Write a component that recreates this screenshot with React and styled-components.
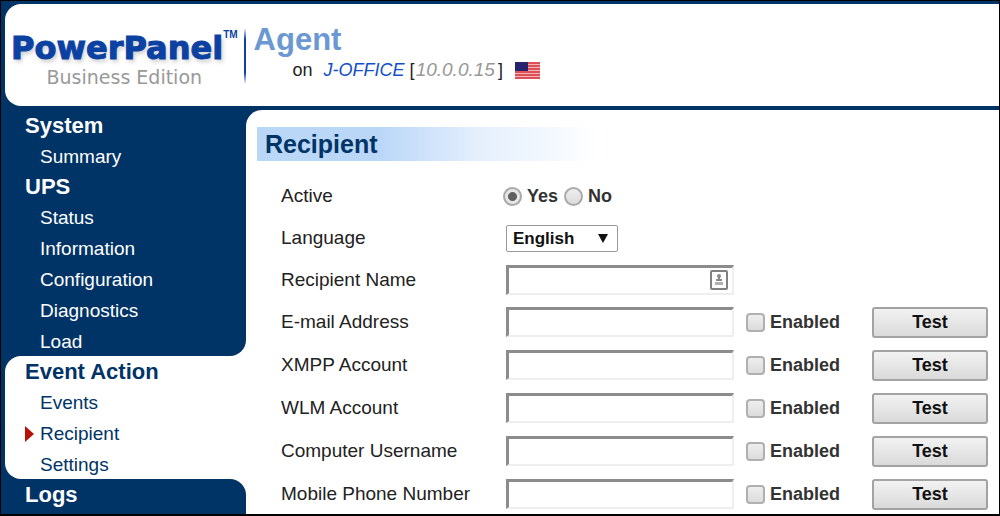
import React, { useState } from "react";
import styled, { createGlobalStyle, css } from "styled-components";

const navy = "#003366";
const sans = '"Liberation Sans", Arial, sans-serif';

const GlobalStyle = createGlobalStyle`
  *, *::before, *::after { box-sizing: border-box; }
  body { margin: 0; background: ${navy}; font-family: ${sans}; }
  button, input, select { font-family: inherit; }
`;

const Page = styled.div`
  min-height: 100vh;
  display: flex;
  flex-direction: column;
  border: 1px solid #000;
  border-bottom-width: 2px;
  background: ${navy};
`;

const Header = styled.header`
  display: flex;
  align-items: flex-start;
  min-height: 102px;
  margin: 3px 0 4px 4px;
  padding: 20px 16px 0 6px;
  background: #fff;
  border-radius: 16px 0 0 16px;
`;

const Logo = styled.div`
  display: grid;
  grid-template-columns: auto auto;
  justify-items: center;
  padding-top: 5px;
  color: #0a41a3;
`;

const LogoName = styled.span`
  font: 700 32px/38px "DejaVu Sans", ${sans};
  -webkit-text-stroke: 1px #0a41a3;
  text-shadow: 2px 3px 4px rgba(0, 0, 0, 0.2);
`;

const LogoMark = styled.span`
  font-size: 10px;
  font-weight: 700;
  line-height: 12px;
`;

const LogoEdition = styled.span`
  grid-column: 1 / -1;
  font: 19px/20px "DejaVu Sans", ${sans};
  color: #999;
`;

const LogoRule = styled.span`
  width: 2px;
  height: 56px;
  margin: 4px 8px 0 6px;
  background: linear-gradient(#fff, #0a41a3 20%, #0a41a3 80%, #fff);
`;

const AppName = styled.h1`
  margin: 0;
  font-size: 31px;
  line-height: 32px;
  color: #6b97d3;
`;

const HostLine = styled.div`
  display: flex;
  align-items: center;
  padding-left: 39px;
  font-size: 18px;
  line-height: 28px;
  color: #222;
`;

const HostName = styled.em`
  margin: 0 5px 0 11px;
  color: #1450c8;
`;

const HostAddress = styled.em`
  margin: 0 3px 0 1px;
  font-size: 19px;
  color: #999;
`;

const FlagButton = styled.a`
  display: flex;
  margin-left: 12px;
`;

const Body = styled.div`
  flex: 1;
  display: flex;
`;

const Sidebar = styled.nav`
  flex: 0 0 245px;
  display: flex;
  flex-direction: column;
`;

const NavBackdrop = styled.div`
  background: ${(p) => (p.$plain ? navy : "#fff")};
  flex: ${(p) => (p.$fill ? 1 : "none")};
  display: flex;
  flex-direction: column;
`;

const NavBlock = styled.div`
  flex: 1;
  ${(p) =>
    p.$active
      ? css`
          margin-left: 4px;
          padding-left: 20px;
          background: #fff;
          color: ${navy};
          border-radius: 16px 0 0 16px;
        `
      : css`
          padding-left: 24px;
          background: ${navy};
          color: #fff;
          border-radius: ${p.$after ? "0 16px 0 0" : "0 0 16px 0"};
        `}
`;

const NavHeading = styled.h2`
  margin: 0;
  padding-top: 2px;
  font-size: 22px;
  line-height: 28px;
`;

const NavList = styled.ul`
  margin: 0;
  padding: 0;
  list-style: none;
`;

const NavItem = styled.li`
  display: flex;
  align-items: center;
  height: 31px;
  padding-top: 2px;
`;

const NavMarker = styled.span`
  display: flex;
  width: 15px;
`;

const NavLink = styled.a`
  font-size: 19px;
  color: inherit;
  text-decoration: none;
`;

const Content = styled.main`
  flex: 1;
  min-width: 0;
  padding: 17px 10px 4px 11px;
  background: #fff;
  border-top-left-radius: 16px;
`;

const Title = styled.h2`
  max-width: 344px;
  margin: 0 0 20px;
  padding-left: 8px;
  font-size: 25px;
  line-height: 34px;
  color: ${navy};
  background: linear-gradient(90deg, #bbd7f8 36%, #e4effc 64%, #fff);
`;

const Form = styled.form`
  display: flex;
  flex-direction: column;
  gap: 12px;
  padding-left: 24px;
`;

const Contacts = styled.div`
  display: flex;
  flex-direction: column;
  gap: 13px;
`;

const Row = styled.div`
  display: flex;
  align-items: center;
  height: 30px;
`;

const Label = styled.label`
  flex: 0 0 225px;
  font-size: 19px;
  color: #222;
`;

const RadioSet = styled.div`
  display: flex;
  align-items: center;
  margin-left: -3px;
  gap: 6px;
`;

const Choice = styled.label`
  display: flex;
  align-items: center;
  gap: 5px;
  font-size: 18px;
  font-weight: 700;
  color: #333;
`;

const Radio = styled.input.attrs({ type: "radio" })`
  appearance: none;
  width: 19px;
  height: 19px;
  margin: 0;
  border: 2px solid #aaa;
  border-radius: 50%;
  background: linear-gradient(#eee, #dcdcdc);
  &:checked {
    background: radial-gradient(circle, #606060 4px, #e6e6e6 5px);
  }
`;

const Checkbox = styled.input.attrs({ type: "checkbox" })`
  appearance: none;
  width: 19px;
  height: 19px;
  margin: 0;
  border: 2px solid #b0b0b0;
  border-radius: 4px;
  background: linear-gradient(#eee, #dcdcdc);
  &:checked {
    background: #666;
    box-shadow: inset 0 0 0 3px #e6e6e6;
  }
`;

const SelectBox = styled.div`
  position: relative;
  width: 112px;
`;

const Select = styled.select`
  appearance: none;
  display: block;
  width: 100%;
  height: 27px;
  padding: 0 24px 0 6px;
  border: 1px solid #999;
  border-radius: 2px;
  background: #fff;
  color: #111;
  font-size: 17px;
  font-weight: 700;
`;

const SelectArrow = styled.svg`
  position: absolute;
  right: 10px;
  top: 9px;
  pointer-events: none;
`;

const FieldBox = styled.div`
  position: relative;
  flex: 0 0 228px;
`;

const TextInput = styled.input`
  display: block;
  width: 100%;
  height: 30px;
  padding: 0 6px;
  border: 3px solid;
  border-color: #8c8c8c #eee #eee #8c8c8c;
  border-width: 3px 2px 2px 3px;
  background: #fff;
  font-size: 17px;
`;

const FieldIcon = styled.svg`
  position: absolute;
  right: 6px;
  top: 5px;
`;

const Enabled = styled(Choice)`
  flex: 0 0 126px;
  margin-left: 12px;
`;

const TestButton = styled.button`
  flex: 0 0 116px;
  height: 31px;
  padding: 0;
  border: 2px solid #a3a3a3;
  border-radius: 3px;
  background: linear-gradient(#f2f2f2, #dadada);
  color: #111;
  font-size: 18px;
  font-weight: 700;
`;

const beforeActive = [
  { title: "System", items: ["Summary"] },
  { title: "UPS", items: ["Status", "Information", "Configuration", "Diagnostics", "Load"] },
];
const activeGroups = [{ title: "Event Action", items: ["Events", "Recipient", "Settings"] }];
const afterActive = [{ title: "Logs", items: [] }];

const contacts = [
  ["email", "E-mail Address"],
  ["xmpp", "XMPP Account"],
  ["wlm", "WLM Account"],
  ["username", "Computer Username"],
  ["mobile", "Mobile Phone Number"],
];

function Flag() {
  return (
    <svg width="25" height="17" viewBox="0 0 25 17" role="img" aria-label="United States">
      <rect width="25" height="17" fill="#dd5055" />
      {[1, 2, 3, 4, 5].map((n) => (
        <rect key={n} y={n * 3 - 1} width="25" height="1" fill="#f2b4b6" />
      ))}
      <rect width="13" height="9" fill="#28236f" />
    </svg>
  );
}

function NavGroups({ groups }) {
  return groups.map((g) => (
    <div key={g.title}>
      <NavHeading>{g.title}</NavHeading>
      <NavList>
        {g.items.map((item) => (
          <NavItem key={item}>
            <NavMarker>
              {item === "Recipient" && (
                <svg width="9" height="16" viewBox="0 0 9 16" aria-hidden="true">
                  <path d="M0 0L9 8L0 16Z" fill="#b81208" />
                </svg>
              )}
            </NavMarker>
            <NavLink href="#" aria-current={item === "Recipient" ? "page" : undefined}>
              {item}
            </NavLink>
          </NavItem>
        ))}
      </NavList>
    </div>
  ));
}

export default function App() {
  const [active, setActive] = useState("yes");
  return (
    <Page>
      <GlobalStyle />
      <Header>
        <Logo>
          <LogoName>PowerPanel</LogoName>
          <LogoMark>TM</LogoMark>
          <LogoEdition>Business Edition</LogoEdition>
        </Logo>
        <LogoRule />
        <div>
          <AppName>Agent</AppName>
          <HostLine>
            on <HostName>J-OFFICE</HostName>[<HostAddress>10.0.0.15</HostAddress>]
            <FlagButton href="#">
              <Flag />
            </FlagButton>
          </HostLine>
        </div>
      </Header>
      <Body>
        <Sidebar>
          <NavBackdrop>
            <NavBlock>
              <NavGroups groups={beforeActive} />
            </NavBlock>
          </NavBackdrop>
          <NavBackdrop $plain>
            <NavBlock $active>
              <NavGroups groups={activeGroups} />
            </NavBlock>
          </NavBackdrop>
          <NavBackdrop $fill>
            <NavBlock $after>
              <NavGroups groups={afterActive} />
            </NavBlock>
          </NavBackdrop>
        </Sidebar>
        <Content>
          <Title>Recipient</Title>
          <Form onSubmit={(e) => e.preventDefault()}>
            <Row role="radiogroup" aria-labelledby="active-label">
              <Label as="span" id="active-label">Active</Label>
              <RadioSet>
                {["Yes", "No"].map((text) => (
                  <Choice key={text}>
                    <Radio
                      name="active"
                      checked={active === text.toLowerCase()}
                      onChange={() => setActive(text.toLowerCase())}
                    />
                    {text}
                  </Choice>
                ))}
              </RadioSet>
            </Row>
            <Row>
              <Label htmlFor="language">Language</Label>
              <SelectBox>
                <Select id="language">
                  <option>English</option>
                </Select>
                <SelectArrow width="10" height="9" viewBox="0 0 10 9" aria-hidden="true">
                  <path d="M0 0H10L5 9Z" fill="#111" />
                </SelectArrow>
              </SelectBox>
            </Row>
            <Row>
              <Label htmlFor="name">Recipient Name</Label>
              <FieldBox>
                <TextInput id="name" type="text" />
                <FieldIcon width="18" height="20" viewBox="0 0 18 20" aria-hidden="true">
                  <rect x="1" y="1" width="16" height="18" rx="1" fill="#fff" stroke="#808080" strokeWidth="2" />
                  <circle cx="9" cy="6" r="2" fill="#888" />
                  <path d="M8 7H10V9H12V11H6V9H8Z" fill="#888" />
                  <rect x="5" y="12" width="8" height="3" fill="#b0b0b0" />
                </FieldIcon>
              </FieldBox>
            </Row>
            <Contacts>
              {contacts.map(([id, text]) => (
                <Row key={id}>
                  <Label htmlFor={id}>{text}</Label>
                  <FieldBox>
                    <TextInput id={id} type="text" />
                  </FieldBox>
                  <Enabled>
                    <Checkbox />
                    Enabled
                  </Enabled>
                  <TestButton type="button">Test</TestButton>
                </Row>
              ))}
            </Contacts>
          </Form>
        </Content>
      </Body>
    </Page>
  );
}
